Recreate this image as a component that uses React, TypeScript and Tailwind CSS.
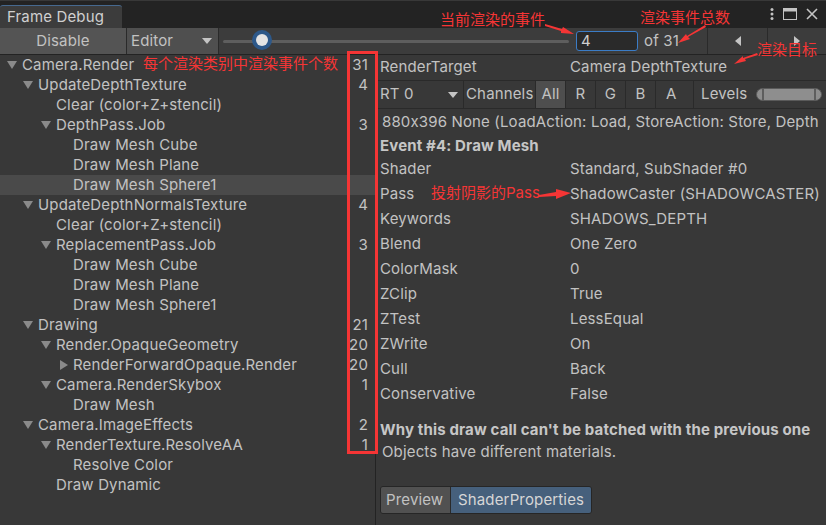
import React from 'react';

type TreeNode = {
  label: string;
  level: number;
  count?: number;
  arrow?: 'down' | 'right';
  selected?: boolean;
};

const tree: TreeNode[] = [
  { label: 'Camera.Render', level: 0, count: 31, arrow: 'down' },
  { label: 'UpdateDepthTexture', level: 1, count: 4, arrow: 'down' },
  { label: 'Clear (color+Z+stencil)', level: 2 },
  { label: 'DepthPass.Job', level: 2, count: 3, arrow: 'down' },
  { label: 'Draw Mesh Cube', level: 3 },
  { label: 'Draw Mesh Plane', level: 3 },
  { label: 'Draw Mesh Sphere1', level: 3, selected: true },
  { label: 'UpdateDepthNormalsTexture', level: 1, count: 4, arrow: 'down' },
  { label: 'Clear (color+Z+stencil)', level: 2 },
  { label: 'ReplacementPass.Job', level: 2, count: 3, arrow: 'down' },
  { label: 'Draw Mesh Cube', level: 3 },
  { label: 'Draw Mesh Plane', level: 3 },
  { label: 'Draw Mesh Sphere1', level: 3 },
  { label: 'Drawing', level: 1, count: 21, arrow: 'down' },
  { label: 'Render.OpaqueGeometry', level: 2, count: 20, arrow: 'down' },
  { label: 'RenderForwardOpaque.Render', level: 3, count: 20, arrow: 'right' },
  { label: 'Camera.RenderSkybox', level: 2, count: 1, arrow: 'down' },
  { label: 'Draw Mesh', level: 3 },
  { label: 'Camera.ImageEffects', level: 1, count: 2, arrow: 'down' },
  { label: 'RenderTexture.ResolveAA', level: 2, count: 1, arrow: 'down' },
  { label: 'Resolve Color', level: 3 },
  { label: 'Draw Dynamic', level: 2 },
];

const indent = ['pl-[7px]', 'pl-[23px]', 'pl-[41px]', 'pl-[58px]'];

const props: [string, string][] = [
  ['Shader', 'Standard, SubShader #0'],
  ['Pass', 'ShadowCaster (SHADOWCASTER)'],
  ['Keywords', 'SHADOWS_DEPTH'],
  ['Blend', 'One Zero'],
  ['ColorMask', '0'],
  ['ZClip', 'True'],
  ['ZTest', 'LessEqual'],
  ['ZWrite', 'On'],
  ['Cull', 'Back'],
  ['Conservative', 'False'],
];

const cjk = { fontFamily: 'Inter, "Noto Sans CJK SC", sans-serif' };

const Arrow = ({ dir }: { dir?: 'down' | 'right' }) => (
  <span className="w-[15px] flex items-center">
    {dir === 'down' && (
      <svg width="10" height="8" viewBox="0 0 10 8">
        <polygon points="0,0 10,0 5,8" fill="#8a8a8a" />
      </svg>
    )}
    {dir === 'right' && (
      <svg width="8" height="10" viewBox="0 0 8 10" className="ml-[2px]">
        <polygon points="0,0 8,5 0,10" fill="#8a8a8a" />
      </svg>
    )}
  </span>
);

const ChannelBtn = ({ label, active }: { label: string; active?: boolean }) => (
  <div
    className={`w-[30px] h-full flex items-center justify-center border-r border-[#2a2a2a] ${
      active ? 'bg-[#4e4e4e]' : ''
    }`}
  >
    {label}
  </div>
);

export default function App() {
  return (
    <div
      className="relative w-[826px] h-[525px] overflow-hidden bg-[#383838] pt-[1px] text-[15px] tracking-[0.01em] text-[#c2c2c2] flex flex-col"
      style={cjk}
    >
      {/* Title bar */}
      <div className="h-[27px] bg-[#232323] flex items-end shrink-0">
        <div className="w-[122px] h-[23px] bg-[#3c3c3c] border-t border-[#46698f] rounded-t-[3px] flex items-center pl-[7px] text-[#d0d0d0]">
          Frame Debug
        </div>
        <div className="flex-1" />
        <div className="self-center flex items-center gap-[9px] pr-[8px] mb-[2px]">
          <svg width="4" height="12" viewBox="0 0 4 12">
            <circle cx="2" cy="1.5" r="1.5" fill="#c4c4c4" />
            <circle cx="2" cy="6" r="1.5" fill="#c4c4c4" />
            <circle cx="2" cy="10.5" r="1.5" fill="#c4c4c4" />
          </svg>
          <svg width="14" height="12" viewBox="0 0 14 12">
            <rect x="0.5" y="0.5" width="13" height="11" fill="none" stroke="#c4c4c4" />
            <rect x="0.5" y="0.5" width="13" height="3" fill="#c4c4c4" />
          </svg>
          <svg width="12" height="12" viewBox="0 0 12 12">
            <path d="M1 1 L11 11 M11 1 L1 11" stroke="#c4c4c4" strokeWidth="1.6" />
          </svg>
        </div>
      </div>

      {/* Toolbar */}
      <div className="h-[27px] bg-[#3c3c3c] border-b border-[#232323] flex items-stretch shrink-0">
        <div className="w-[127px] bg-[#545454] border-r border-[#2a2a2a] flex items-center justify-center">
          Disable
        </div>
        <div className="w-[92px] bg-[#4f4f4f] border-r border-[#2a2a2a] flex items-center justify-between pl-[4px] pr-[6px]">
          <span>Editor</span>
          <svg width="10" height="6" viewBox="0 0 10 6">
            <polygon points="0,0 10,0 5,6" fill="#c4c4c4" />
          </svg>
        </div>
        <div className="relative w-[346px] ml-[4px] flex items-center">
          <div className="w-full h-[3px] bg-[#5e5e5e] rounded" />
          <div className="absolute left-[29px] top-[2px] w-[20px] h-[20px] rounded-full bg-[#2d5889] flex items-center justify-center">
            <div className="w-[12px] h-[12px] rounded-full bg-[#e4e4e4]" />
          </div>
        </div>
        <div className="ml-[7px] my-[3px] w-[62px] rounded-[3px] border border-[#3b7cc6] bg-[#2a2a2a] flex items-center pl-[4px] text-[#d0d0d0]">
          4
        </div>
        <div className="ml-[6px] w-[63px] flex items-center">of 31</div>
        <div className="w-[60px] border-l border-[#2a2a2a] flex items-center justify-center">
          <svg width="6" height="10" viewBox="0 0 6 10">
            <polygon points="6,0 6,10 0,5" fill="#c4c4c4" />
          </svg>
        </div>
        <div className="flex-1 border-l border-[#2a2a2a] flex items-center justify-center">
          <svg width="6" height="10" viewBox="0 0 6 10">
            <polygon points="0,0 6,5 0,10" fill="#c4c4c4" />
          </svg>
        </div>
      </div>

      <div className="flex flex-1 min-h-0">
        {/* Event tree */}
        <div className="w-[376px] border-r border-[#232323] shrink-0">
          {tree.map((n, i) => (
            <div
              key={i}
              className={`h-[20px] flex items-center pr-[7px] ${indent[n.level]} ${
                n.selected ? 'bg-[#4a4a4a]' : ''
              }`}
            >
              <Arrow dir={n.arrow} />
              <span className="flex-1 whitespace-nowrap">{n.label}</span>
              {n.count !== undefined && <span>{n.count}</span>}
            </div>
          ))}
        </div>

        {/* Details */}
        <div className="flex-1 min-w-0 flex flex-col">
          <div className="h-[26px] border-b border-[#2a2a2a] flex items-center pl-[4px]">
            <span className="w-[190px]">RenderTarget</span>
            <span>Camera DepthTexture</span>
          </div>
          <div className="h-[28px] border-b border-[#2a2a2a] flex items-stretch">
            <div className="w-[88px] border-r border-[#2a2a2a] flex items-center justify-between pl-[4px] pr-[5px]">
              <span>RT 0</span>
              <svg width="10" height="6" viewBox="0 0 10 6">
                <polygon points="0,0 10,0 5,6" fill="#c4c4c4" />
              </svg>
            </div>
            <div className="w-[72px] border-r border-[#2a2a2a] flex items-center pl-[2px] whitespace-nowrap">Channels</div>
            <ChannelBtn label="All" active />
            <ChannelBtn label="R" />
            <ChannelBtn label="G" />
            <ChannelBtn label="B" />
            <div className="w-[38px] h-full flex items-center pl-[10px] border-r border-[#2a2a2a]">A</div>
            <div className="flex items-center pl-[7px]">
              <span>Levels</span>
              <div className="ml-[9px] w-[66px] h-[13px] rounded-full bg-[#8e8e8e] border border-[#5a5a5a] flex justify-between px-[5px]">
                <div className="w-[2px] h-full bg-[#5e5e5e]" />
                <div className="w-[2px] h-full bg-[#5e5e5e]" />
              </div>
            </div>
          </div>

          <div className="h-[26px] flex items-center pl-[6px] whitespace-nowrap">
            880x396 None (LoadAction: Load, StoreAction: Store, Depth
          </div>
          <div className="h-[22px] flex items-center pl-[4px] font-bold text-[#c6c6c6]">Event #4: Draw Mesh</div>
          {props.map(([k, v]) => (
            <div key={k} className="h-[25px] flex items-center pl-[4px] whitespace-nowrap">
              <span className="w-[190px]">{k}</span>
              <span>{v}</span>
            </div>
          ))}
          <div className="mt-[12px] h-[22px] flex items-center pl-[4px] font-bold text-[#c6c6c6] whitespace-nowrap">
            Why this draw call can't be batched with the previous one
          </div>
          <div className="h-[22px] flex items-center pl-[6px]">Objects have different materials.</div>
          <div className="mt-[23px] ml-[4px] flex h-[28px] w-fit rounded-[3px] border border-[#262626] overflow-hidden">
            <div className="w-[70px] bg-[#515151] flex items-center pl-[5px] border-r border-[#2a2a2a]">Preview</div>
            <div className="w-[140px] bg-[#46607c] flex items-center pl-[7px] text-[#d6d6d6] whitespace-nowrap">ShaderProperties</div>
          </div>
        </div>
      </div>

      {/* Annotations */}
      <div className="absolute left-[347px] top-[51px] w-[31px] h-[403px] border-[3px] border-[#f53535]" />
      <div className="absolute left-[143px] top-[53px] text-[15px] leading-[22px] tracking-normal text-[#f53535]">每个渲染类别中渲染事件个数</div>
      <div className="absolute left-[440px] top-[9px] text-[15px] leading-[22px] tracking-normal text-[#f53535]">当前渲染的事件</div>
      <div className="absolute left-[640px] top-[7px] text-[15px] leading-[22px] tracking-normal text-[#f53535]">渲染事件总数</div>
      <div className="absolute left-[757px] top-[39px] text-[15px] leading-[22px] tracking-normal text-[#f53535]">渲染目标</div>
      <div className="absolute left-[431px] top-[182px] text-[15px] leading-[22px] tracking-normal text-[#f53535]">投射阴影的Pass</div>
      <svg className="absolute left-0 top-0 pointer-events-none" width="826" height="525">
        <g fill="#f53535">
          <polygon points="545,24 562,29 563,27 574,34 561,33 561,31 545,26" />
          <polygon points="706,27 688,37 690,39 678,43 686,34 687,36 705,25" />
          <polygon points="758,55 745,59 746,61 734,64 743,56 743,58 757,53" />
          <polygon points="539,197 556,196 556,199 571,193 556,189 556,192 539,195" />
        </g>
      </svg>
    </div>
  );
}
